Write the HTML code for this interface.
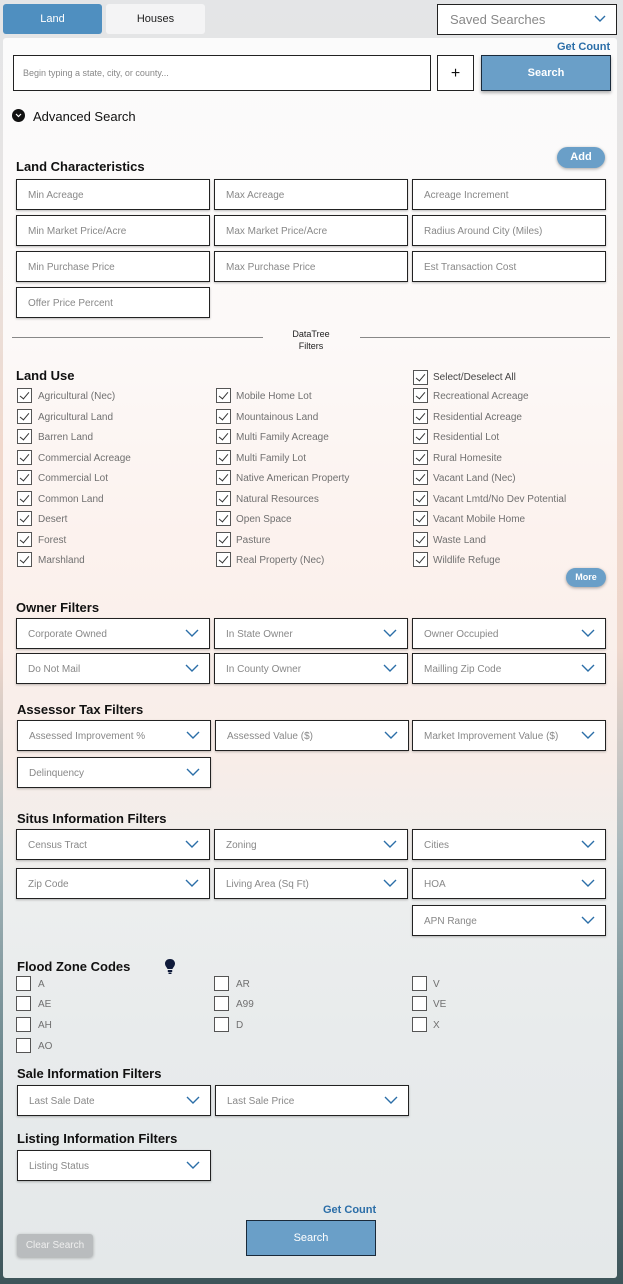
<!DOCTYPE html>
<html><head><meta charset="utf-8"><style>
*{margin:0;padding:0;box-sizing:border-box}
body{width:623px;height:1284px;position:relative;overflow:hidden;font-family:"Liberation Sans",sans-serif;
background:linear-gradient(180deg,#e4e5e7 0px,#e6e4e3 200px,#f0d8cc 450px,#eed6cb 650px,#a9b9bd 850px,#6f8a90 1050px,#3d5459 1284px)}
#panel{position:absolute;left:3px;top:38px;width:614px;height:1240px;border-radius:3px;
background:linear-gradient(180deg,#fbfbfb 0px,#fcf9f8 300px,#fcf2ee 500px,#f8ede8 720px,#eceeee 860px,#e8ebec 1000px,#e4e8e9 1240px)}
.a{position:absolute}
.in{position:absolute;width:194px;height:31px;border:1px solid #222;background:#fff;font-size:10px;color:#888;line-height:31px;padding-left:11px;box-shadow:0 1px 2px rgba(0,0,0,.25)}
.dd svg{position:absolute;right:10px;top:10px}
.h{position:absolute;left:16px;font-size:13px;font-weight:bold;color:#111}
.cb{position:absolute;width:15px;height:15px;border:1px solid #555;background:#fff}
.cb.k::after{content:"";position:absolute;left:4px;top:1px;width:4px;height:8px;border:solid #333;border-width:0 1.2px 1.2px 0;transform:rotate(40deg)}
.lb{position:absolute;font-size:10px;color:#707070;margin-top:1px}
.btn{position:absolute;background:#6a9fc8;color:#fff;text-align:center;font-weight:bold}
</style></head><body>
<div class="a" style="left:3px;top:4px;width:99px;height:30px;background:#4f8fc0;border-radius:3px;color:#fff;font-size:11px;text-align:center;line-height:30px">Land</div>
<div class="a" style="left:106px;top:4px;width:99px;height:30px;background:#f4f4f5;border-radius:3px;color:#222;font-size:11px;text-align:center;line-height:30px">Houses</div>
<div class="a" style="left:437px;top:4px;width:180px;height:31px;background:#fff;border:1px solid #222;font-size:13px;color:#888;line-height:29px;padding-left:12px">Saved Searches<svg class="a" style="right:10px;top:10px" width="12" height="8"><path d="M1 1L6 6L11 1" stroke="#2b6ea8" stroke-width="1.4" fill="none"/></svg></div>
<div id="panel"></div>
<div class="a" style="left:557px;top:41px;font-size:11px;font-weight:bold;color:#2b6ea8">Get Count</div>
<div class="a" style="left:13px;top:55px;width:418px;height:36px;border:1px solid #222;background:#fff;font-size:9px;color:#888;line-height:35px;padding-left:9px">Begin typing a state, city, or county...</div>
<div class="a" style="left:437px;top:55px;width:37px;height:36px;border:1px solid #222;background:#fff;font-size:16px;text-align:center;line-height:35px;color:#111">+</div>
<div class="btn" style="left:481px;top:55px;width:130px;height:36px;border:1px solid #1a2a3a;font-size:11px;line-height:34px;box-shadow:0 2px 3px rgba(0,0,0,.3)">Search</div>
<div class="a" style="left:12px;top:109px;width:13px;height:13px;border-radius:50%;background:#111"><svg class="a" style="left:3px;top:4px" width="7" height="5"><path d="M1 1L3.5 3.5L6 1" stroke="#fff" stroke-width="1.2" fill="none"/></svg></div>
<div class="a" style="left:33px;top:109px;font-size:13px;color:#111">Advanced Search</div>
<div class="btn" style="left:557px;top:147px;width:48px;height:21px;border-radius:11px;font-size:11px;line-height:21px;box-shadow:0 1px 3px rgba(0,0,0,.35)">Add</div>
<div class="h" style="top:159px">Land Characteristics</div>
<div class="in" style="left:16px;top:179px">Min Acreage</div>
<div class="in" style="left:214px;top:179px">Max Acreage</div>
<div class="in" style="left:412px;top:179px">Acreage Increment</div>
<div class="in" style="left:16px;top:215px">Min Market Price/Acre</div>
<div class="in" style="left:214px;top:215px">Max Market Price/Acre</div>
<div class="in" style="left:412px;top:215px">Radius Around City (Miles)</div>
<div class="in" style="left:16px;top:251px">Min Purchase Price</div>
<div class="in" style="left:214px;top:251px">Max Purchase Price</div>
<div class="in" style="left:412px;top:251px">Est Transaction Cost</div>
<div class="in" style="left:16px;top:287px">Offer Price Percent</div>
<div class="a" style="left:12px;top:337px;width:251px;height:1px;background:#888"></div>
<div class="a" style="left:360px;top:337px;width:250px;height:1px;background:#888"></div>
<div class="a" style="left:270px;top:328px;width:82px;text-align:center;font-size:9px;line-height:12px;color:#222">DataTree<br>Filters</div>

<div class="h" style="top:368px">Land Use</div>
<div class="cb k" style="left:413px;top:370px"></div><div class="lb" style="left:433px;top:371px;color:#444">Select/Deselect All</div>

<div class="cb k" style="left:17px;top:388px"></div><div class="lb" style="left:38px;top:390px">Agricultural (Nec)</div>
<div class="cb k" style="left:17px;top:409px"></div><div class="lb" style="left:38px;top:411px">Agricultural Land</div>
<div class="cb k" style="left:17px;top:429px"></div><div class="lb" style="left:38px;top:431px">Barren Land</div>
<div class="cb k" style="left:17px;top:450px"></div><div class="lb" style="left:38px;top:452px">Commercial Acreage</div>
<div class="cb k" style="left:17px;top:470px"></div><div class="lb" style="left:38px;top:472px">Commercial Lot</div>
<div class="cb k" style="left:17px;top:491px"></div><div class="lb" style="left:38px;top:493px">Common Land</div>
<div class="cb k" style="left:17px;top:511px"></div><div class="lb" style="left:38px;top:513px">Desert</div>
<div class="cb k" style="left:17px;top:532px"></div><div class="lb" style="left:38px;top:534px">Forest</div>
<div class="cb k" style="left:17px;top:552px"></div><div class="lb" style="left:38px;top:554px">Marshland</div>

<div class="cb k" style="left:216px;top:388px"></div><div class="lb" style="left:236px;top:390px">Mobile Home Lot</div>
<div class="cb k" style="left:216px;top:409px"></div><div class="lb" style="left:236px;top:411px">Mountainous Land</div>
<div class="cb k" style="left:216px;top:429px"></div><div class="lb" style="left:236px;top:431px">Multi Family Acreage</div>
<div class="cb k" style="left:216px;top:450px"></div><div class="lb" style="left:236px;top:452px">Multi Family Lot</div>
<div class="cb k" style="left:216px;top:470px"></div><div class="lb" style="left:236px;top:472px">Native American Property</div>
<div class="cb k" style="left:216px;top:491px"></div><div class="lb" style="left:236px;top:493px">Natural Resources</div>
<div class="cb k" style="left:216px;top:511px"></div><div class="lb" style="left:236px;top:513px">Open Space</div>
<div class="cb k" style="left:216px;top:532px"></div><div class="lb" style="left:236px;top:534px">Pasture</div>
<div class="cb k" style="left:216px;top:552px"></div><div class="lb" style="left:236px;top:554px">Real Property (Nec)</div>

<div class="cb k" style="left:413px;top:388px"></div><div class="lb" style="left:433px;top:390px">Recreational Acreage</div>
<div class="cb k" style="left:413px;top:409px"></div><div class="lb" style="left:433px;top:411px">Residential Acreage</div>
<div class="cb k" style="left:413px;top:429px"></div><div class="lb" style="left:433px;top:431px">Residential Lot</div>
<div class="cb k" style="left:413px;top:450px"></div><div class="lb" style="left:433px;top:452px">Rural Homesite</div>
<div class="cb k" style="left:413px;top:470px"></div><div class="lb" style="left:433px;top:472px">Vacant Land (Nec)</div>
<div class="cb k" style="left:413px;top:491px"></div><div class="lb" style="left:433px;top:493px">Vacant Lmtd/No Dev Potential</div>
<div class="cb k" style="left:413px;top:511px"></div><div class="lb" style="left:433px;top:513px">Vacant Mobile Home</div>
<div class="cb k" style="left:413px;top:532px"></div><div class="lb" style="left:433px;top:534px">Waste Land</div>
<div class="cb k" style="left:413px;top:552px"></div><div class="lb" style="left:433px;top:554px">Wildlife Refuge</div>
<div class="btn" style="left:566px;top:568px;width:40px;height:19px;border-radius:10px;font-size:9px;line-height:19px;box-shadow:0 1px 3px rgba(0,0,0,.35)">More</div>

<div class="h" style="top:600px">Owner Filters</div>
<div class="in dd" style="left:16px;top:618px">Corporate Owned<svg width="14" height="9"><path d="M1 1L7 7L13 1" stroke="#2b6ea8" stroke-width="1.4" fill="none"/></svg></div>
<div class="in dd" style="left:214px;top:618px">In State Owner<svg width="14" height="9"><path d="M1 1L7 7L13 1" stroke="#2b6ea8" stroke-width="1.4" fill="none"/></svg></div>
<div class="in dd" style="left:412px;top:618px">Owner Occupied<svg width="14" height="9"><path d="M1 1L7 7L13 1" stroke="#2b6ea8" stroke-width="1.4" fill="none"/></svg></div>
<div class="in dd" style="left:16px;top:653px">Do Not Mail<svg width="14" height="9"><path d="M1 1L7 7L13 1" stroke="#2b6ea8" stroke-width="1.4" fill="none"/></svg></div>
<div class="in dd" style="left:214px;top:653px">In County Owner<svg width="14" height="9"><path d="M1 1L7 7L13 1" stroke="#2b6ea8" stroke-width="1.4" fill="none"/></svg></div>
<div class="in dd" style="left:412px;top:653px">Mailling Zip Code<svg width="14" height="9"><path d="M1 1L7 7L13 1" stroke="#2b6ea8" stroke-width="1.4" fill="none"/></svg></div>

<div class="h" style="top:702px;left:17px">Assessor Tax Filters</div>
<div class="in dd" style="left:17px;top:720px">Assessed Improvement %<svg width="14" height="9"><path d="M1 1L7 7L13 1" stroke="#2b6ea8" stroke-width="1.4" fill="none"/></svg></div>
<div class="in dd" style="left:215px;top:720px">Assessed Value ($)<svg width="14" height="9"><path d="M1 1L7 7L13 1" stroke="#2b6ea8" stroke-width="1.4" fill="none"/></svg></div>
<div class="in dd" style="left:412px;top:720px">Market Improvement Value ($)<svg width="14" height="9"><path d="M1 1L7 7L13 1" stroke="#2b6ea8" stroke-width="1.4" fill="none"/></svg></div>
<div class="in dd" style="left:17px;top:757px">Delinquency<svg width="14" height="9"><path d="M1 1L7 7L13 1" stroke="#2b6ea8" stroke-width="1.4" fill="none"/></svg></div>

<div class="h" style="top:811px;left:17px">Situs Information Filters</div>
<div class="in dd" style="left:16px;top:829px">Census Tract<svg width="14" height="9"><path d="M1 1L7 7L13 1" stroke="#2b6ea8" stroke-width="1.4" fill="none"/></svg></div>
<div class="in dd" style="left:214px;top:829px">Zoning<svg width="14" height="9"><path d="M1 1L7 7L13 1" stroke="#2b6ea8" stroke-width="1.4" fill="none"/></svg></div>
<div class="in dd" style="left:412px;top:829px">Cities<svg width="14" height="9"><path d="M1 1L7 7L13 1" stroke="#2b6ea8" stroke-width="1.4" fill="none"/></svg></div>
<div class="in dd" style="left:16px;top:868px">Zip Code<svg width="14" height="9"><path d="M1 1L7 7L13 1" stroke="#2b6ea8" stroke-width="1.4" fill="none"/></svg></div>
<div class="in dd" style="left:214px;top:868px">Living Area (Sq Ft)<svg width="14" height="9"><path d="M1 1L7 7L13 1" stroke="#2b6ea8" stroke-width="1.4" fill="none"/></svg></div>
<div class="in dd" style="left:412px;top:868px">HOA<svg width="14" height="9"><path d="M1 1L7 7L13 1" stroke="#2b6ea8" stroke-width="1.4" fill="none"/></svg></div>
<div class="in dd" style="left:412px;top:905px">APN Range<svg width="14" height="9"><path d="M1 1L7 7L13 1" stroke="#2b6ea8" stroke-width="1.4" fill="none"/></svg></div>

<div class="h" style="top:959px;left:17px">Flood Zone Codes</div>
<svg class="a" style="left:164px;top:958px" width="12" height="17"><path d="M6 1C2.5 1 1 3.5 1 5.5C1 8 3 9.5 3.5 11H8.5C9 9.5 11 8 11 5.5C11 3.5 9.5 1 6 1Z" fill="#0f1a3a"/><rect x="3.8" y="12" width="4.4" height="2" fill="#0f1a3a"/><rect x="4.5" y="14.5" width="3" height="1.5" fill="#0f1a3a"/></svg>
<div class="cb" style="left:16px;top:976px"></div><div class="lb" style="left:38px;top:978px">A</div>
<div class="cb" style="left:16px;top:996px"></div><div class="lb" style="left:38px;top:998px">AE</div>
<div class="cb" style="left:16px;top:1017px"></div><div class="lb" style="left:38px;top:1019px">AH</div>
<div class="cb" style="left:16px;top:1038px"></div><div class="lb" style="left:38px;top:1040px">AO</div>
<div class="cb" style="left:214px;top:976px"></div><div class="lb" style="left:236px;top:978px">AR</div>
<div class="cb" style="left:214px;top:996px"></div><div class="lb" style="left:236px;top:998px">A99</div>
<div class="cb" style="left:214px;top:1017px"></div><div class="lb" style="left:236px;top:1019px">D</div>
<div class="cb" style="left:412px;top:976px"></div><div class="lb" style="left:433px;top:978px">V</div>
<div class="cb" style="left:412px;top:996px"></div><div class="lb" style="left:433px;top:998px">VE</div>
<div class="cb" style="left:412px;top:1017px"></div><div class="lb" style="left:433px;top:1019px">X</div>

<div class="h" style="top:1066px;left:17px">Sale Information Filters</div>
<div class="in dd" style="left:17px;top:1085px">Last Sale Date<svg width="14" height="9"><path d="M1 1L7 7L13 1" stroke="#2b6ea8" stroke-width="1.4" fill="none"/></svg></div>
<div class="in dd" style="left:215px;top:1085px">Last Sale Price<svg width="14" height="9"><path d="M1 1L7 7L13 1" stroke="#2b6ea8" stroke-width="1.4" fill="none"/></svg></div>
<div class="h" style="top:1131px;left:17px">Listing Information Filters</div>
<div class="in dd" style="left:17px;top:1150px">Listing Status<svg width="14" height="9"><path d="M1 1L7 7L13 1" stroke="#2b6ea8" stroke-width="1.4" fill="none"/></svg></div>

<div class="a" style="left:323px;top:1204px;font-size:11px;font-weight:bold;color:#2b6ea8">Get Count</div>
<div class="btn" style="left:246px;top:1220px;width:130px;height:36px;border:1px solid #1a2a3a;font-size:11px;line-height:34px;font-weight:normal">Search</div>
<div class="a" style="left:17px;top:1234px;width:76px;height:23px;border-radius:3px;background:#b9bcbe;color:#eee;font-size:10px;text-align:center;line-height:23px;box-shadow:0 1px 3px rgba(0,0,0,.3)">Clear Search</div>
</body></html>
